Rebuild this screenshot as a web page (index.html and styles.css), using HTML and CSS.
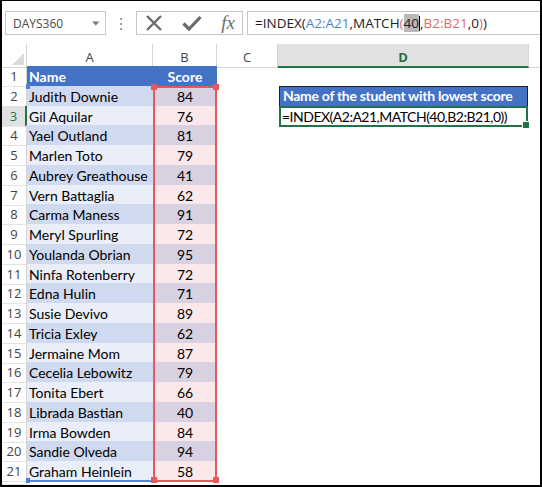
FILE: index.html
```html
<!DOCTYPE html>
<html>
<head>
<meta charset="utf-8">
<link rel="stylesheet" href="styles.css">
</head>
<body>
<div class="frame">
  <div class="toolbar">
    <div class="namebox"><span>DAYS360</span><svg class="dd" width="8" height="5" viewBox="0 0 8 5"><path d="M0 0.5h7.5L3.75 4.5z" fill="#7a7a7a"/></svg></div>
    <div class="grip"><i></i><i></i><i></i></div>
    <div class="fnbox">
      <svg width="18" height="18" viewBox="0 0 18 18"><path d="M2 2L16 16M16 2L2 16" stroke="#6b6b6b" stroke-width="2.4" fill="none"/></svg>
      <svg width="20" height="16" viewBox="0 0 20 16"><path d="M1.5 8.5L7 14L18.5 2" stroke="#6b6b6b" stroke-width="3.2" fill="none" stroke-linejoin="miter"/></svg>
      <span class="fx">fx</span>
    </div>
    <div class="formula">=INDEX(<span class="ra">A2:A21</span>,MATCH<span class="rp">(</span><span class="hl">40</span><span class="caret"></span>,<span class="rb">B2:B21</span>,0<span class="rp">)</span>)</div>
  </div>
  <div class="sheet">
    <div class="row colhead">
      <div class="rh corner"><svg width="12" height="12" viewBox="0 0 12 12"><path d="M12 0V12H0z" fill="#dcdcdc"/></svg></div>
      <div>A</div><div>B</div><div>C</div><div class="selcol">D</div><div class="ehead"></div>
    </div>
    <div class="row hdr"><div class="rh">1</div><div class="a">Name</div><div class="b">Score</div><div class="c"></div><div class="d"></div><div></div></div>
    <div class="row dk"><div class="rh">2</div><div class="a first">Judith Downie</div><div class="b rng first">84</div><div class="c"></div><div class="d"><div class="d2">Name of the student with lowest score</div></div><div></div></div>
    <div class="row lt"><div class="rh act">3</div><div class="a">Gil Aquilar</div><div class="b rng">76</div><div class="c"></div><div class="d"><div class="d3">=INDEX(A2:A21,MATCH(40,B2:B21,0))</div></div><div></div></div>
    <div class="row dk"><div class="rh">4</div><div class="a">Yael Outland</div><div class="b rng">81</div><div class="c"></div><div class="d"></div><div></div></div>
    <div class="row lt"><div class="rh">5</div><div class="a">Marlen Toto</div><div class="b rng">79</div><div class="c"></div><div class="d"></div><div></div></div>
    <div class="row dk"><div class="rh">6</div><div class="a">Aubrey Greathouse</div><div class="b rng">41</div><div class="c"></div><div class="d"></div><div></div></div>
    <div class="row lt"><div class="rh">7</div><div class="a">Vern Battaglia</div><div class="b rng">62</div><div class="c"></div><div class="d"></div><div></div></div>
    <div class="row dk"><div class="rh">8</div><div class="a">Carma Maness</div><div class="b rng">91</div><div class="c"></div><div class="d"></div><div></div></div>
    <div class="row lt"><div class="rh">9</div><div class="a">Meryl Spurling</div><div class="b rng">72</div><div class="c"></div><div class="d"></div><div></div></div>
    <div class="row dk"><div class="rh">10</div><div class="a">Youlanda Obrian</div><div class="b rng">95</div><div class="c"></div><div class="d"></div><div></div></div>
    <div class="row lt"><div class="rh">11</div><div class="a">Ninfa Rotenberry</div><div class="b rng">72</div><div class="c"></div><div class="d"></div><div></div></div>
    <div class="row dk"><div class="rh">12</div><div class="a">Edna Hulin</div><div class="b rng">71</div><div class="c"></div><div class="d"></div><div></div></div>
    <div class="row lt"><div class="rh">13</div><div class="a">Susie Devivo</div><div class="b rng">89</div><div class="c"></div><div class="d"></div><div></div></div>
    <div class="row dk"><div class="rh">14</div><div class="a">Tricia Exley</div><div class="b rng">62</div><div class="c"></div><div class="d"></div><div></div></div>
    <div class="row lt"><div class="rh">15</div><div class="a">Jermaine Mom</div><div class="b rng">87</div><div class="c"></div><div class="d"></div><div></div></div>
    <div class="row dk"><div class="rh">16</div><div class="a">Cecelia Lebowitz</div><div class="b rng">79</div><div class="c"></div><div class="d"></div><div></div></div>
    <div class="row lt"><div class="rh">17</div><div class="a">Tonita Ebert</div><div class="b rng">66</div><div class="c"></div><div class="d"></div><div></div></div>
    <div class="row dk"><div class="rh">18</div><div class="a">Librada Bastian</div><div class="b rng">40</div><div class="c"></div><div class="d"></div><div></div></div>
    <div class="row lt"><div class="rh">19</div><div class="a">Irma Bowden</div><div class="b rng">84</div><div class="c"></div><div class="d"></div><div></div></div>
    <div class="row dk"><div class="rh">20</div><div class="a">Sandie Olveda</div><div class="b rng">94</div><div class="c"></div><div class="d"></div><div></div></div>
    <div class="row lt"><div class="rh">21</div><div class="a last">Graham Heinlein</div><div class="b rng last">58</div><div class="c"></div><div class="d"></div><div></div></div>
    <div class="row tail"><div class="rh"></div><div></div><div></div><div></div><div></div><div></div></div>
  </div>
</div>
</body>
</html>
```
FILE: styles.css
```css
* { box-sizing: border-box; margin: 0; padding: 0; }
html, body { margin: 0; background: #fff; }

.frame {
  width: 542px;
  height: 487px;
  border: 2px solid #000;
  border-top-width: 1px;
  display: flex;
  flex-direction: column;
  overflow: hidden;
  background: #fff;
}

/* ---------- toolbar ---------- */
.toolbar {
  height: 43px;
  flex: none;
  display: flex;
  align-items: flex-start;
  padding: 10px 0 0 3px;
}
.namebox {
  width: 101px;
  height: 24px;
  border: 1px solid #c6c6c6;
  display: flex;
  align-items: center;
  justify-content: space-between;
  padding: 0 5px 0 7px;
  font: 12px "Open Sans", sans-serif;
  color: #4a4a4a;
}
.dd { display: block; }
.grip {
  margin: 7px 0 0 14px;
  width: 2px;
  display: flex;
  flex-direction: column;
  gap: 3px;
}
.grip i { display: block; width: 2px; height: 2px; background: #a0a0a0; }
.fnbox {
  margin-left: 14px;
  width: 107px;
  height: 24px;
  border: 1px solid #c6c6c6;
  display: flex;
  align-items: center;
  justify-content: space-between;
  padding: 0 7px 0 8px;
}
.fnbox svg { display: block; }
.fx {
  font: italic 19px "Liberation Serif", serif;
  color: #6b6b6b;
  line-height: 20px;
}
.formula {
  margin-left: 4px;
  flex: 1;
  height: 24px;
  border: 1px solid #c6c6c6;
  border-right: none;
  padding-left: 7px;
  font: 13.5px "Open Sans", sans-serif;
  line-height: 22px;
  color: #222;
  white-space: nowrap;
  overflow: hidden;
}
.ra { color: #4d7fd4; }
.rb { color: #e56a6c; }
.rp { color: #e56a6c; }
.hl { background: #b9b9b9; }
.caret {
  display: inline-block;
  width: 1px;
  height: 15px;
  background: #000;
  vertical-align: -3px;
}

/* ---------- sheet ---------- */
.sheet {
  flex: 1;
  display: flex;
  flex-direction: column;
  font: 14px Lato, sans-serif;
  color: #000;
}
.row {
  display: grid;
  grid-template-columns: 25px 126px 64px 61px 251px 1fr;
  height: 19.75px;
  flex: none;
}
.row.tail { flex: 1; height: auto; }

.colhead { height: 22px; }
.colhead > div {
  border-right: 1px solid #d5d5d5;
  border-bottom: 1px solid #d5d5d5;
  text-align: center;
  font: 13px "Open Sans", sans-serif;
  color: #444;
  padding-top: 4px;
}
.colhead > .ehead { border-right: none; }
.colhead > .corner {
  display: flex;
  align-items: flex-end;
  justify-content: flex-end;
  padding: 0 2px 2px 0;
}
.colhead > .selcol {
  background: #e1e1e1;
  color: #217346;
  font-weight: bold;
  border-bottom: 2px solid #217346;
}

.rh {
  border-right: 1px solid #d5d5d5;
  border-bottom: 1px solid #e4e4e4;
  text-align: center;
  font: 13px "Open Sans", sans-serif;
  color: #444;
  line-height: 19px;
  padding-top: 1px;
}
.rh.act {
  background: #e1e1e1;
  color: #217346;
  border-right: 2px solid #217346;
}

.a, .b {
  line-height: 19px;
  padding-top: 1px;
  white-space: nowrap;
  position: relative;
}
.a { padding-left: 2px; }
.b { text-align: center; }

.hdr .a, .hdr .b {
  background: #4472c4;
  color: #fff;
  font-weight: bold;
}

.dk .a { background: #cfd9ef; border-bottom: 1px solid #b7c7e6; }
.lt .a { background: #e9eef8; border-bottom: 1px solid #b7c7e6; }
.dk .b { background: #d8d1e1; border-bottom: 1px solid #c9b9d2; }
.lt .b { background: #fbe8ea; border-bottom: 1px solid #c9b9d2; }

/* red range B2:B21 */
.b.rng { box-shadow: inset 2px 0 0 #e5585c, inset -2px 0 0 #e5585c; }
.b.rng.first { box-shadow: inset 2px 0 0 #e5585c, inset -2px 0 0 #e5585c, inset 0 2px 0 #e5585c; }
.b.rng.last { box-shadow: inset 2px 0 0 #e5585c, inset -2px 0 0 #e5585c, inset 0 -2px 0 #e5585c; border-bottom: none; }
.b.first::before, .b.first::after,
.b.last::before, .b.last::after {
  content: "";
  position: absolute;
  width: 6px;
  height: 6px;
  background: #e5585c;
}
.b.first::before { left: -2px; top: -2px; }
.b.first::after { right: -2px; top: -2px; }
.b.last::before { left: -2px; bottom: -1px; }
.b.last::after { right: -2px; bottom: -1px; }

/* blue range A2:A21 */
.a.first::before, .a.last::before {
  content: "";
  position: absolute;
  left: -1px;
  width: 4px;
  height: 5px;
  background: #4d7fd4;
}
.a.first::before { top: -2px; }
.a.last::before { bottom: -1px; }
.a.last { border-bottom: none; box-shadow: inset 0 -2px 0 #5585d6; }

/* column D */
.d { position: relative; }
.d2 {
  height: 100%;
  margin: 0 1px;
  background: #4472c4;
  border: 1px solid #1e1e1e;
  color: #fff;
  font-weight: bold;
  padding-left: 3px;
  line-height: 18px;
  letter-spacing: -0.3px;
  white-space: nowrap;
  overflow: hidden;
}
.d3 {
  height: 100%;
  margin: 0 1px;
  border: 2px solid #217346;
  padding-left: 1px;
  line-height: 17px;
  letter-spacing: -0.5px;
  white-space: nowrap;
  position: relative;
}
.d3::after {
  content: "";
  position: absolute;
  right: -4px;
  bottom: -4px;
  width: 6px;
  height: 6px;
  background: #217346;
  border: 1px solid #fff;
}
```
